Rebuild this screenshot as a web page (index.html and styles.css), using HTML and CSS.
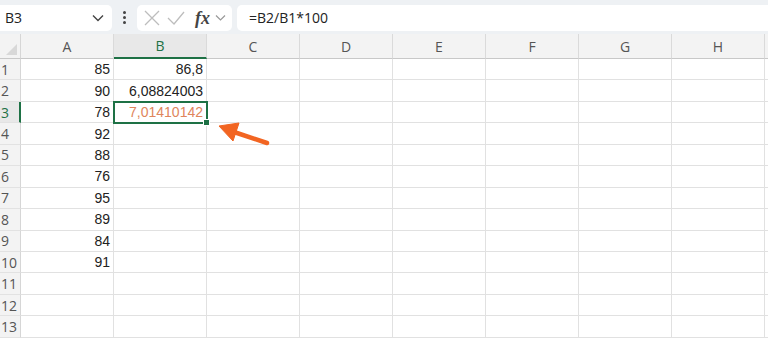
FILE: index.html
```html
<!DOCTYPE html>
<html lang="en">
<head>
  <meta charset="UTF-8">
  <title>Sheet</title>
  <link rel="stylesheet" href="styles.css">
</head>
<body>
  <div class="toolbar">
    <div class="name-box">
      <span>B3</span>
      <svg class="chev" width="12" height="8" viewBox="0 0 12 8"><path d="M1 1.5 L6 6.5 L11 1.5" fill="none" stroke="#444" stroke-width="1.4"/></svg>
    </div>
    <div class="dots"><i></i><i></i><i></i></div>
    <div class="fx-box">
      <svg width="18" height="18" viewBox="0 0 18 18"><path d="M2 2 L16 16 M16 2 L2 16" stroke="#bdbdbd" stroke-width="1.3"/></svg>
      <svg width="20" height="18" viewBox="0 0 20 18"><path d="M2 9 L8 15 L18 3" fill="none" stroke="#bdbdbd" stroke-width="1.3"/></svg>
      <span class="fx">fx</span>
      <svg width="11" height="8" viewBox="0 0 11 8"><path d="M1 1.5 L5.5 6 L10 1.5" fill="none" stroke="#999" stroke-width="1.2"/></svg>
    </div>
    <div class="formula">=B2/B1*100</div>
  </div>

  <div class="sheet">
    <div class="grid" id="grid"></div>
    <svg class="arrow" width="70" height="45" viewBox="0 0 70 45">
      <path d="M24 22 L57 33" stroke="#f26522" stroke-width="4.5" stroke-linecap="round"/>
      <path d="M9 16 L29 13 L23 31 Z" fill="#f26522" stroke="#f26522" stroke-width="1" stroke-linejoin="round"/>
    </svg>
  </div>

  <script>
    const grid = document.getElementById('grid');
    const cols = ['A', 'B', 'C', 'D', 'E', 'F', 'G', 'H'];
    const colA = [85, 90, 78, 92, 88, 76, 95, 89, 84, 91];
    const colB = ['86,8', '6,08824003', '7,01410142'];

    let html = '<div class="corner"><span></span></div>';
    cols.forEach((c) => {
      html += `<div class="col-head${c === 'B' ? ' active' : ''}">${c}</div>`;
    });
    html += '<div class="col-head edge"></div>';

    for (let r = 1; r <= 13; r++) {
      html += `<div class="row-head${r === 3 ? ' active' : ''}">${r}</div>`;
      cols.forEach((c, i) => {
        let val = '';
        if (i === 0 && colA[r - 1] !== undefined) val = colA[r - 1];
        if (i === 1 && colB[r - 1] !== undefined) val = colB[r - 1];
        const sel = (i === 1 && r === 3) ? ' selected' : '';
        html += `<div class="cell${sel}">${val}${sel ? '<b class="handle"></b>' : ''}</div>`;
      });
      html += '<div class="cell edge"></div>';
    }
    grid.innerHTML = html;
  </script>
</body>
</html>
```

FILE: styles.css
```css
body {
  margin: 0;
  width: 768px;
  height: 338px;
  overflow: hidden;
  background: #fff;
  font-family: "Liberation Sans", Arial, sans-serif;
}

.toolbar {
  height: 34px;
  background: #eef1f4;
  display: flex;
  align-items: center;
  box-sizing: border-box;
  padding-top: 1px;
}

.name-box {
  width: 112px;
  height: 26px;
  background: #fff;
  border-radius: 0 5px 5px 0;
  display: flex;
  align-items: center;
  justify-content: space-between;
  padding: 0 8px 0 5px;
  box-sizing: border-box;
  font-family: "Open Sans", sans-serif;
  font-size: 14px;
  color: #222;
}

.dots {
  width: 25px;
  display: flex;
  flex-direction: column;
  align-items: center;
  gap: 2px;
}

.dots i {
  width: 3px;
  height: 3px;
  border-radius: 50%;
  background: #444;
}

.fx-box {
  width: 95px;
  height: 26px;
  background: #fff;
  border-radius: 5px;
  display: flex;
  align-items: center;
  padding: 0 4px 0 6px;
  box-sizing: border-box;
  gap: 5px;
}

.fx {
  font-family: "Liberation Serif", serif;
  font-style: italic;
  font-weight: bold;
  font-size: 18px;
  color: #444;
  margin-left: 4px;
  line-height: 1;
}

.formula {
  flex: 1;
  height: 26px;
  margin-left: 5px;
  background: #fff;
  border-radius: 5px 0 0 5px;
  display: flex;
  align-items: center;
  padding-left: 12px;
  font-family: "Open Sans", sans-serif;
  font-size: 14px;
  color: #222;
}

.sheet {
  position: relative;
}

.grid {
  display: grid;
  grid-template-columns: 21px repeat(8, 93px) 3px;
  grid-template-rows: 25px repeat(13, 21.45px);
}

.corner {
  background: #f3f3f3;
  border-right: 1px solid #d6d6d6;
  border-bottom: 1px solid #c8c8c8;
  position: relative;
}

.corner span {
  position: absolute;
  right: 3px;
  bottom: 3px;
  width: 0;
  height: 0;
  border-left: 11px solid transparent;
  border-bottom: 11px solid #d8d8d8;
}

.col-head {
  background: #f3f3f3;
  border-right: 1px solid #dadada;
  border-bottom: 1px solid #c8c8c8;
  display: flex;
  align-items: center;
  justify-content: center;
  font-family: "Open Sans", sans-serif;
  font-size: 14px;
  color: #555;
}

.col-head.active {
  background: #e8e8e8;
  color: #1e7145;
  border-bottom: 2px solid #1e7145;
}

.col-head.edge {
  border-right: none;
}

.row-head {
  background: #f3f3f3;
  border-right: 1px solid #d6d6d6;
  border-bottom: 1px solid #e2e2e2;
  display: flex;
  align-items: center;
  padding-left: 1px;
  font-family: "Open Sans", sans-serif;
  font-size: 14px;
  color: #555;
}

.row-head.active {
  background: #e8e8e8;
  color: #1e7145;
  border-right: 2px solid #1e7145;
}

.cell {
  border-right: 1px solid #e1e1e1;
  border-bottom: 1px solid #e1e1e1;
  display: flex;
  align-items: center;
  justify-content: flex-end;
  padding-right: 3px;
  font-size: 14px;
  color: #222;
  position: relative;
}

.cell.edge {
  border-right: none;
  padding: 0;
}

.cell.selected {
  outline: 2px solid #1e7145;
  outline-offset: -1px;
  color: #e0855c;
  z-index: 1;
}

.handle {
  position: absolute;
  right: -4px;
  bottom: -4px;
  width: 5px;
  height: 5px;
  background: #1e7145;
  border: 1px solid #fff;
}

.arrow {
  position: absolute;
  left: 210px;
  top: 76px;
}
```
